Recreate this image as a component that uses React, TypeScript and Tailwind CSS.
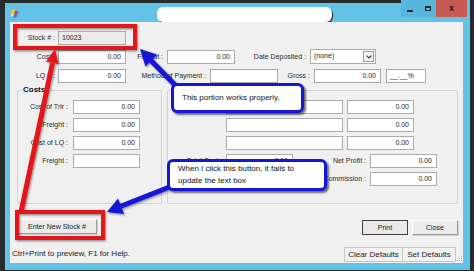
import React from 'react';

type BoxProps = { className: string; value?: string; left?: boolean; readOnly?: boolean };

const TextBox: React.FC<BoxProps> = ({ className, value = '', left, readOnly }) => (
  <div
    className={`h-[14px] shrink-0 border border-[#acacac] text-[7px] leading-[12px] text-[#1e1e1e] ${
      readOnly ? 'bg-[#ebebeb]' : 'bg-white'
    } ${left ? 'pl-[3px] text-left' : 'pr-[4px] text-right'} ${className}`}
  >
    {value}
  </div>
);

const Label: React.FC<{ className: string; children: React.ReactNode }> = ({ className, children }) => (
  <span className={`shrink-0 whitespace-nowrap text-right text-[7px] leading-[14px] text-[#2a2a2a] ${className}`}>
    {children}
  </span>
);

const App: React.FC = () => {
  return (
    <div className="relative h-[271px] w-[474px] overflow-hidden bg-[#262b2e] font-['Liberation_Sans',Arial,sans-serif]">
      <div className="ml-[5px] flex h-[270px] w-[465px] flex-col bg-[#62c3e7]">
        {/* title bar */}
        <div className="flex h-[22px] shrink-0">
          <div className="-ml-[5px] flex flex-1 border-t-[3px] border-[#262b2e] pl-[5px]">
            <div className="w-[5px] shrink-0 bg-[#62c3e7]" />
            <div className="flex flex-1 bg-[#62c3e7]">
              <svg className="ml-[0px] mt-[6px] shrink-0" width="9" height="9" viewBox="0 0 9 9">
                <circle cx="3" cy="3" r="2.4" fill="#f3c531" />
                <circle cx="6.4" cy="3.4" r="2" fill="#e0483a" />
                <circle cx="5" cy="6.6" r="2.1" fill="#3b78d8" />
                <circle cx="2.4" cy="6" r="1.6" fill="#f6e07a" />
              </svg>
              <div className="ml-[138px] mt-[4px] h-[15px] w-[175px] rounded-[6px] bg-white shadow-[1px_1px_0_#2c2c2c]" />
            </div>
          </div>
          <div className="flex h-[17px] w-[18px] items-end justify-center bg-[#57b6db] pb-[5px]">
            <div className="h-[2px] w-[6px] bg-[#1d2b33]" />
          </div>
          <div className="flex h-[17px] w-[17px] items-center justify-center bg-[#57b6db]">
            <div className="h-[5px] w-[6px] border-[1.5px] border-t-[2px] border-[#1d2b33]" />
          </div>
          <div className="flex h-[17px] w-[31px] items-center justify-center bg-[#c75a52] text-[9px] font-bold leading-none text-[#1a1a1a]">
            x
          </div>
          <div className="w-[3px]" />
        </div>

        {/* client area */}
        <div className="ml-[5px] flex h-[241px] w-[453px] flex-col bg-[#f0f0f0]">
          <div className="flex pt-[9px]">
            <Label className="w-[45px]">Stock # :</Label>
            <TextBox className="ml-[3px] w-[68px]" value="10023" left readOnly />
          </div>

          <div className="mt-[5px] flex">
            <Label className="w-[45px]">Cost :</Label>
            <TextBox className="ml-[3px] w-[68px]" value="0.00" />
            <Label className="w-[37px]">Freight :</Label>
            <TextBox className="ml-[4px] w-[68px]" value="0.00" />
            <Label className="w-[71px]">Date Deposited :</Label>
            <div className="ml-[4px] flex h-[15px] w-[66px] -translate-y-[1px] items-center border border-[#acacac] bg-white pl-[3px]">
              <span className="flex-1 text-[7px] text-[#1e1e1e]">(none)</span>
              <div className="mr-[1px] flex h-[11px] w-[11px] items-center justify-center border border-[#9a9a9a] bg-[#f4f4f4]">
                <svg width="6" height="4" viewBox="0 0 6 4">
                  <path d="M0.6 0.6 L3 3 L5.4 0.6" fill="none" stroke="#333" strokeWidth="1.1" />
                </svg>
              </div>
            </div>
          </div>

          <div className="mt-[4px] flex">
            <Label className="w-[45px]">LQ $ :</Label>
            <TextBox className="ml-[3px] w-[68px]" value="0.00" />
            <Label className="w-[80px]">Method of Payment :</Label>
            <TextBox className="ml-[4px] w-[68px]" />
            <Label className="w-[32px]">Gross :</Label>
            <TextBox className="ml-[4px] w-[67px]" value="0.00" />
            <TextBox className="ml-[5px] w-[40px]" value="__.__%" left />
          </div>

          <div className="mt-[7px] flex">
            {/* Costs group */}
            <div className="relative ml-[7px] flex h-[114px] w-[145px] flex-col gap-[4px] rounded-[2px] border border-[#d3d3d3] pt-[9px]">
              <span className="absolute -top-[6px] left-[4px] bg-[#f0f0f0] px-[1px] text-[8px] font-bold leading-[10px] text-[#111]">
                Costs
              </span>
              <div className="flex">
                <Label className="w-[50px]">Cost of Trlr :</Label>
                <TextBox className="ml-[5px] w-[67px]" value="0.00" />
              </div>
              <div className="flex">
                <Label className="w-[50px]">Freight :</Label>
                <TextBox className="ml-[5px] w-[67px]" value="0.00" />
              </div>
              <div className="flex">
                <Label className="w-[50px]">Cost of LQ :</Label>
                <TextBox className="ml-[5px] w-[67px]" value="0.00" />
              </div>
              <div className="flex">
                <Label className="w-[50px]">Freight :</Label>
                <TextBox className="ml-[5px] w-[67px]" />
              </div>
            </div>

            {/* totals group */}
            <div className="ml-[5px] flex h-[114px] w-[291px] flex-col gap-[4px] rounded-[2px] border border-[#d3d3d3] pt-[9px]">
              <div className="flex pl-[58px]">
                <TextBox className="w-[117px]" />
                <TextBox className="ml-[4px] w-[67px]" value="0.00" />
              </div>
              <div className="flex pl-[58px]">
                <TextBox className="w-[117px]" />
                <TextBox className="ml-[4px] w-[67px]" value="0.00" />
              </div>
              <div className="flex pl-[58px]">
                <TextBox className="w-[117px]" />
                <TextBox className="ml-[4px] w-[67px]" value="0.00" />
              </div>
              <div className="flex">
                <Label className="w-[54px]">Total Cost :</Label>
                <TextBox className="ml-[4px] w-[67px]" value="0.00" />
                <Label className="w-[73px]">Net Profit :</Label>
                <TextBox className="ml-[4px] w-[67px]" value="0.00" />
              </div>
              <div className="flex">
                <div className="w-[125px] shrink-0" />
                <Label className="w-[73px]">Commission :</Label>
                <TextBox className="ml-[4px] w-[67px]" value="0.00" />
              </div>
            </div>
          </div>

          <div className="mt-[15px] flex">
            <button className="ml-[7px] h-[15px] w-[80px] border border-b-[#9c9c9c] border-l-white border-r-[#9c9c9c] border-t-white bg-[#ececec] text-[7px] leading-[13px] text-[#222] shadow-[1px_1px_0_#d0d0d0]">
              Enter New Stock #
            </button>
            <div className="flex-1" />
            <button className="mt-[1px] h-[15px] w-[46px] border border-[#404040] bg-[#e9e9e9] text-[7px] leading-[13px] text-[#222]">
              Print
            </button>
            <button className="ml-[4px] mt-[1px] h-[15px] w-[46px] border border-b-[#9c9c9c] border-l-white border-r-[#9c9c9c] border-t-white bg-[#ececec] text-[7px] leading-[13px] text-[#222] shadow-[1px_1px_0_#d0d0d0]">
              Close
            </button>
            <div className="w-[5px]" />
          </div>

          {/* status bar */}
          <div className="mt-auto flex h-[18px] items-center">
            <span className="ml-[2px] text-[8px] text-[#222]">Ctrl+Print to preview, F1 for Help.</span>
            <div className="flex-1" />
            <button className="h-[15px] w-[59px] border border-[#c6c6c6] bg-[#f2f2f2] text-[8px] leading-[13px] text-[#222]">
              Clear Defaults
            </button>
            <button className="h-[15px] w-[53px] border border-l-0 border-[#c6c6c6] bg-[#f2f2f2] text-[8px] leading-[13px] text-[#222]">
              Set Defaults
            </button>
            <svg className="self-end" width="7" height="9" viewBox="0 0 7 9">
              <rect x="5" y="2" width="1" height="1" fill="#a8a8a8" />
              <rect x="3" y="4" width="1" height="1" fill="#a8a8a8" />
              <rect x="5" y="4" width="1" height="1" fill="#a8a8a8" />
              <rect x="1" y="6" width="1" height="1" fill="#a8a8a8" />
              <rect x="3" y="6" width="1" height="1" fill="#a8a8a8" />
              <rect x="5" y="6" width="1" height="1" fill="#a8a8a8" />
            </svg>
          </div>
        </div>
      </div>

      {/* annotations drawn over the screenshot */}
      <svg className="pointer-events-none absolute left-0 top-0" width="474" height="271" viewBox="0 0 474 271">
        <defs>
          <filter id="sh" x="-10%" y="-10%" width="130%" height="130%">
            <feDropShadow dx="1" dy="1.2" stdDeviation="0.8" floodColor="#000" floodOpacity="0.45" />
          </filter>
        </defs>
        <g filter="url(#sh)">
          <rect x="15" y="26" width="120" height="22" fill="none" stroke="#e3141b" strokeWidth="4" />
          <rect x="17" y="212" width="86" height="26" fill="none" stroke="#e3141b" strokeWidth="4" />
          <line x1="21" y1="212" x2="52.5" y2="63" stroke="#e3141b" strokeWidth="5" />
          <polygon points="55,49 58.5,64 46,61.5" fill="#e3141b" />
          <line x1="180" y1="90" x2="151" y2="60.5" stroke="#1616d6" strokeWidth="5" />
          <polygon points="140,49 157,54.5 145.5,66.5" fill="#1616d6" />
          <line x1="172" y1="186" x2="120" y2="206.5" stroke="#1616d6" strokeWidth="5" />
          <polygon points="107,212 124,214 118,198.5" fill="#1616d6" />
        </g>
      </svg>

      <div className="absolute left-[171px] top-[83px] flex h-[30px] w-[133px] items-center rounded-[6px] border-[3px] border-[#1616d6] bg-white pl-[8px] text-[8px] text-[#111] shadow-[2px_2px_2px_rgba(0,0,0,0.55)]">
        This portion works properly,
      </div>
      <div className="absolute left-[167px] top-[159px] flex h-[32px] w-[160px] flex-col justify-center rounded-[6px] border-[3px] border-[#1616d6] bg-white pl-[8px] text-[8px] leading-[12px] text-[#111] shadow-[2px_2px_2px_rgba(0,0,0,0.55)]">
        <span>When I click this button, it fails to</span>
        <span>update the text box</span>
      </div>
    </div>
  );
};

export default App;
